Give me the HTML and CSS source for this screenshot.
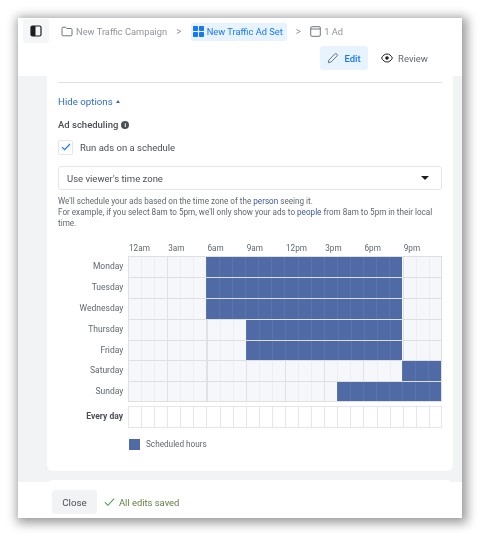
FILE: index.html
```html
<!DOCTYPE html>
<html lang="en">
<head>
<meta charset="utf-8">
<title>Ad scheduling</title>
<link rel="stylesheet" href="styles.css">
</head>
<body>
<div class="window">
  <header class="top">
    <div class="crumbs">
      <button class="toggle" aria-label="Toggle sidebar">
        <svg width="12" height="12" viewBox="0 0 12 12"><rect x="1" y="1" width="10" height="10" rx="1.5" fill="none" stroke="#1c1e21" stroke-width="1.2"/><path d="M2 1h3.5v10H2a1 1 0 0 1-1-1V2a1 1 0 0 1 1-1z" fill="#1c1e21"/></svg>
      </button>
      <span class="crumb first">
        <svg width="12" height="11" viewBox="0 0 12 11"><path d="M1 2.2c0-.6.4-1 1-1h2.6l1.2 1.3H10c.6 0 1 .4 1 1v5.3c0 .6-.4 1-1 1H2c-.6 0-1-.4-1-1z" fill="none" stroke="#606770" stroke-width=".9"/></svg>
        New Traffic Campaign
      </span>
      <span class="sep">&gt;</span>
      <span class="crumb active">
        <svg width="11" height="11" viewBox="0 0 11 11" fill="#1877f2"><rect width="5" height="5" rx=".8"/><rect x="6" width="5" height="5" rx=".8"/><rect y="6" width="5" height="5" rx=".8"/><rect x="6" y="6" width="5" height="5" rx=".8"/></svg>
        New Traffic Ad Set
      </span>
      <span class="sep">&gt;</span>
      <span class="crumb">
        <svg width="11" height="11" viewBox="0 0 11 11" fill="none" stroke="#606770" stroke-width=".9"><rect x=".7" y=".7" width="9.6" height="9.6" rx="1.2"/><path d="M.7 3h9.6"/></svg>
        1 Ad
      </span>
    </div>
    <div class="modes">
      <button class="mode on">
        <svg width="12" height="12" viewBox="0 0 12 12" fill="none" stroke="#606770" stroke-width=".9"><path d="M1.3 10.7l.6-2.7 5.900-6a1.3 1.3 0 0 1 1.900 0l.2.2a1.3 1.3 0 0 1 0 1.900l-5.900 6z"/></svg>
        Edit
      </button>
      <button class="mode">
        <svg width="12" height="10" viewBox="0 0 12 10"><path d="M.6 5C2 2.300 3.800 1 6 1s4 1.300 5.400 4C10 7.700 8.200 9 6 9S2 7.700.6 5z" fill="none" stroke="#1c1e21" stroke-width="1"/><circle cx="6" cy="5" r="1.800" fill="#1c1e21"/></svg>
        Review
      </button>
    </div>
  </header>

  <main class="main">
    <section class="card">
      <hr class="rule">
      <a class="link options">Hide options <span class="caret-up"></span></a>
      <h2 class="heading">Ad scheduling <span class="info">i</span></h2>
      <label class="check">
        <span class="box"><svg width="10" height="8" viewBox="0 0 10 8"><path d="M1 4.200l2.600 2.500L9 1" fill="none" stroke="#1877f2" stroke-width="1.100"/></svg></span>
        Run ads on a schedule
      </label>
      <div class="select">Use viewer's time zone <span class="caret-down"></span></div>
      <p class="help">We'll schedule your ads based on the time zone of the <a class="link">person</a> seeing it.<br>For example, if you select 8am to 5pm, we'll only show your ads to <a class="link">people</a> from 8am to 5pm in their local<br>time.</p>

      <div class="schedule">
        <div class="hours">
          <span>12am</span><span>3am</span><span>6am</span><span>9am</span><span>12pm</span><span>3pm</span><span>6pm</span><span>9pm</span>
        </div>
        <div class="days">
          <div class="day">Monday</div><div class="slots"><div class="on h6-21"></div></div>
          <div class="day">Tuesday</div><div class="slots"><div class="on h6-21"></div></div>
          <div class="day">Wednesday</div><div class="slots"><div class="on h6-21"></div></div>
          <div class="day">Thursday</div><div class="slots"><div class="on h9-21"></div></div>
          <div class="day">Friday</div><div class="slots"><div class="on h9-21"></div></div>
          <div class="day">Saturday</div><div class="slots"><div class="on h21-24"></div></div>
          <div class="day">Sunday</div><div class="slots"><div class="on h16-24"></div></div>
        </div>
        <div class="every">
          <div class="day strong">Every day</div><div class="every-slots"></div>
        </div>
        <div class="legend"><span class="swatch"></span>Scheduled hours</div>
      </div>
    </section>
    <div class="card next"></div>
  </main>

  <footer class="foot">
    <button class="close">Close</button>
    <svg width="11" height="10" viewBox="0 0 12 10"><path d="M1 5.300l3.300 3.300L11 1.300" fill="none" stroke="#42a043" stroke-width="1.100"/></svg>
    <span class="saved">All edits saved</span>
  </footer>
</div>
</body>
</html>
```
FILE: styles.css
```css
* { box-sizing: border-box; }
html, body { margin: 0; height: 100%; background: #fff; }
body {
  padding: 18px;
  font-family: Roboto, "Liberation Sans", sans-serif;
  color: #4b4f56;
}
button { font: inherit; border: 0; background: none; padding: 0; color: inherit; }
svg { flex: none; }
.window {
  width: 444px;
  height: 500px;
  display: flex;
  flex-direction: column;
  background: #fff;
  box-shadow: 2px 2px 10px 3px rgba(0,0,0,.4);
  filter: blur(.5px);
  overflow: hidden;
}
.top { height: 58px; flex: none; display: flex; flex-direction: column; background: #fff; }
.crumbs { height: 26px; display: flex; align-items: center; font-size: 9.300px; color: #90949c; padding: 0 0 0 5px; }
.toggle { width: 26px; height: 24px; margin: 0 12px 0 0; background: #f5f6f7; border-radius: 3px; display: flex; align-items: center; justify-content: center; }
.crumb { display: flex; align-items: center; gap: 3px; height: 18px; white-space: nowrap; margin-top: 1px; }
.crumb.active { color: #1877f2; background: #e7f3ff; border-radius: 2px; padding: 0 3px 0 2px; width: 96px; }
.sep { width: 23.500px; text-align: center; color: #90949c; font-size: 10px; margin-top: 1px; }
.modes { display: flex; justify-content: flex-end; align-items: center; height: 24px; margin-top: 2px; padding-right: 34px; gap: 13px; font-size: 9.500px; }
.mode { display: flex; align-items: center; gap: 5px; height: 24px; color: #606770; }
.mode.on { width: 48px; justify-content: center; background: #e7f3ff; color: #1877f2; font-weight: 500; border-radius: 3px; }

.main { flex: 1; min-height: 0; padding: 0 9px 0 29px; background: #f2f3f5; display: flex; flex-direction: column; gap: 9px; overflow: hidden; }
.card { background: #fff; padding: 6px 11px 0; height: 395px; flex: none; border-radius: 0 0 6px 6px; }
.next { height: 20px; border-radius: 6px 6px 0 0; }
.rule { border: 0; border-top: 1px solid #dddfe2; margin: 0 0 13px; }
.link { color: #385898; }
.options { display: block; height: 12px; line-height: 12px; font-size: 9.700px; color: #2d6fc0; }
.caret-up { display: inline-block; border: 2.500px solid transparent; border-top: 0; border-bottom: 3px solid #2d6fc0; vertical-align: 2px; margin-left: 1px; }
.heading { margin: 11px 0 0; height: 12px; line-height: 12px; font-size: 9.500px; font-weight: 500; color: #4b4f56; display: flex; align-items: center; gap: 3px; }
.info { width: 8px; height: 8px; border-radius: 50%; background: #4b4f56; color: #fff; font-size: 6px; line-height: 8px; text-align: center; font-weight: 700; }
.check { display: flex; align-items: center; gap: 7px; margin-top: 8px; height: 16px; font-size: 9.500px; color: #4b4f56; }
.box { width: 15px; height: 15px; border: 1px solid #e4e6eb; border-radius: 2px; display: flex; align-items: center; justify-content: center; }
.select { height: 24px; margin-top: 11px; border: 1px solid #e4e6eb; border-radius: 3px; padding: 0 12px 0 8px; display: flex; align-items: center; justify-content: space-between; font-size: 9.500px; color: #4b4f56; }
.caret-down { border: 4px solid transparent; border-bottom: 0; border-top: 4px solid #1c1e21; }
.help { margin: 6px 0 0; font-size: 8.150px; line-height: 11px; color: #606770; white-space: nowrap; }
.schedule { margin-top: 15px; font-size: 8.200px; color: #606770; }
.hours { display: grid; grid-template-columns: repeat(8, 39.250px); padding-left: 70px; height: 9px; line-height: 9px; }
.hours span { padding-left: 1px; }
.days { display: grid; grid-template-columns: 70.300px 313.700px; grid-auto-rows: 20.900px; margin-top: 3px; }
.day { text-align: right; padding-right: 5px; font-size: 8.500px; line-height: 20px; color: #606770; }
.strong { font-weight: 700; color: #4b4f56; }
.slots {
  display: grid;
  grid-template-columns: repeat(24, 1fr);
  background-color: #f5f7fa;
  background-image:
    repeating-linear-gradient(90deg, #dfe1e4 0 1px, transparent 1px 39.250px),
    repeating-linear-gradient(90deg, #eceef0 0 1px, transparent 1px 13.083px);
  border-right: 1px solid #dddfe2;
  border-top: 1px solid #dddfe2;
}
.days .slots:last-of-type { border-bottom: 1px solid #dddfe2; }
.on {
  background-color: #506aa6;
  background-image: repeating-linear-gradient(90deg, #5a74ae 0 1px, transparent 1px 13.083px);
}
.h6-21 { grid-column: 7 / 22; }
.h9-21 { grid-column: 10 / 22; }
.h21-24 { grid-column: 22 / 25; }
.h16-24 { grid-column: 17 / 25; }
.every { display: grid; grid-template-columns: 70px 314px; height: 22px; margin-top: 4px; }
.every-slots {
  border: 1px solid #e4e6eb;
  border-width: 1px 1px 1px 0;
  background-image: repeating-linear-gradient(90deg, #e4e6eb 0 1px, transparent 1px 13.083px);
}
.legend { display: flex; align-items: center; gap: 6px; margin: 10px 0 0 71px; height: 12px; line-height: 12px; }
.swatch { width: 11px; height: 11px; background: #506aa6; }

.foot { height: 36px; flex: none; display: flex; align-items: center; padding: 4px 0 0 34px; background: #fff; }
.close { width: 45px; height: 24px; margin-right: 7px; background: #f2f3f5; border-radius: 3px; font-size: 9.800px; color: #4b4f56; }
.saved { margin-left: 4px; font-size: 9.400px; color: #5f7f42; }
```
